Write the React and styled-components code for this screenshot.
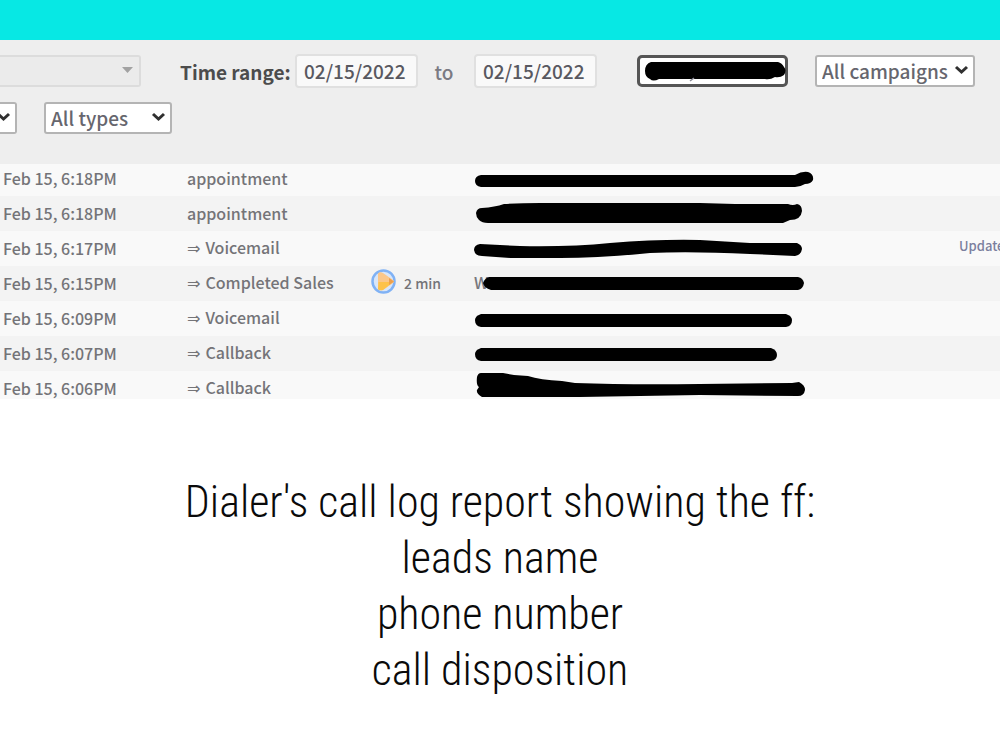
import React, { useState } from 'react';
import styled, { createGlobalStyle } from 'styled-components';

const GlobalStyle = createGlobalStyle`
    * {
        box-sizing: border-box;
    }

    body {
        margin: 0;
        background: #ffffff;
        overflow-x: hidden;
        font-family: 'Noto Sans CJK SC', 'Open Sans', sans-serif;
        font-weight: 500;
    }
`;

// Styled components
const TopBar = styled.header`
    height: 40px;
    background: #07e8e4;
`;

const Filters = styled.form`
    display: flex;
    flex-direction: column;
    gap: 13px;
    padding: 14px 0 26px;
    background: #eeeeee;
    color: #4c4c4c;
    font-size: 19px;
    overflow: hidden;
`;

const FilterRow = styled.div`
    display: flex;
    align-items: center;
    gap: 27px;
    height: 34px;
`;

const SelectBox = styled.div`
    position: relative;
    flex: none;
    width: ${(props) => props.$width}px;
`;

const Select = styled.select`
    display: block;
    width: 100%;
    height: 32px;
    padding: 0 5px 1px;
    appearance: none;
    border: 2px solid #b4b4b4;
    border-left-width: ${(props) => (props.$cut ? 0 : 2)}px;
    border-radius: ${(props) => (props.$cut ? '0 3px 3px 0' : '3px')};
    background: #ffffff;
    color: #66666e;
    font-family: inherit;
    font-size: 19px;
    font-weight: 500;
    outline: none;

    &:disabled {
        border-color: #dcdcdc;
        background: #ebebeb;
        opacity: 1;
    }
`;

const Arrow = styled.svg`
    position: absolute;
    top: 10px;
    right: 6px;
    pointer-events: none;
`;

const Range = styled.div`
    display: flex;
    align-items: center;
    flex: none;
    margin: 0 13px 0 12px;
`;

const RangeLabel = styled.label`
    width: 115px;
    font-weight: bold;
    white-space: nowrap;
`;

const ToLabel = styled.label`
    width: 56px;
    padding-right: 4px;
    text-align: center;
    color: #7a7a82;
`;

const DateInput = styled.input`
    width: 123px;
    height: 34px;
    padding: 0 7px 2px;
    border: 2px solid #e0e0e0;
    border-radius: 4px;
    background: #f9f9f9;
    color: #585860;
    font-family: inherit;
    font-size: 19px;
    font-weight: 500;
    outline: none;
`;

const AgentBox = styled.div`
    position: relative;
    flex: none;
    width: 151px;
`;

const AgentInput = styled.input`
    display: block;
    width: 100%;
    height: 32px;
    border: 3px solid #555555;
    border-radius: 5px;
    background: #ffffff;
    outline: none;
`;

const AgentMark = styled.svg`
    position: absolute;
    top: 0;
    left: 0;
    pointer-events: none;
`;

const LogPane = styled.section`
    overflow: hidden;
    border-top: 3px solid #eeeeee;
`;

const LogTable = styled.table`
    width: 100%;
    margin: -3px 0 -7px;
    table-layout: fixed;
    border-spacing: 0;
    color: #747478;
    font-size: 16px;
    line-height: 24px;
`;

const LogRow = styled.tr`
    height: 35px;
    background: #f9f9f9;

    &:nth-child(even) {
        background: #f3f3f3;
    }
`;

const Cell = styled.td`
    padding: 0 0 2px 3px;
    white-space: nowrap;
`;

const Transfer = styled.span`
    margin-right: 5px;
    font-family: 'DejaVu Sans', sans-serif;
`;

const LeadCell = styled.td`
    padding: 0;
`;

const Recording = styled.div`
    display: flex;
    align-items: center;
    gap: 8px;
    font-size: 14px;
`;

const PlayButton = styled.button`
    display: block;
    padding: 0;
    border: none;
    background: none;
    cursor: pointer;
`;

const Scribble = styled.svg`
    display: block;
`;

const UpdateLink = styled.a`
    display: block;
    padding-bottom: 4px;
    color: #7b7f9e;
    font-size: 13px;
    text-decoration: none;
`;

const Caption = styled.p`
    margin: 0;
    padding: 75px 20px 0;
    color: #0a0a0a;
    font-family: 'Roboto Condensed', 'Liberation Sans Narrow', sans-serif;
    font-size: 44px;
    font-weight: 350;
    line-height: 56px;
    text-align: center;
`;

const calls = [
    { time: 'Feb 15, 6:18PM', result: 'appointment', mark: 'M11 14H325Q332 10 338 11Q344 13 343 19Q341 23 335 23Q330 26 325 26H11Q5 25 5 20Q5 15 11 14Z' },
    { time: 'Feb 15, 6:18PM', result: 'appointment', mark: 'M12 12Q25 11 34 8Q50 7 70 7H230L265 8H318Q323 10 327 8Q332 9 332 15Q331 24 320 24L313 27H18Q12 27 9 24Q6 21 6 17Q7 12 12 12Z' },
    { time: 'Feb 15, 6:17PM', result: 'Voicemail', transfer: true, mark: 'M10 13L50 15Q100 16 140 12Q190 8 230 9L280 12L327 12Q332 14 332 18Q331 24 325 25L280 23Q220 20 180 22Q130 27 90 27H40L12 25Q5 25 4 19Q4 14 10 13Z', update: true },
    { time: 'Feb 15, 6:15PM', result: 'Completed Sales', transfer: true, length: '2 min', initial: 'W', mark: 'M19 11H328Q333 12 334 17Q333 23 328 24H21Q14 22 13 17Q15 12 19 11Z' },
    { time: 'Feb 15, 6:09PM', result: 'Voicemail', transfer: true, mark: 'M11 13H316Q322 15 322 19Q322 25 316 26H11Q5 25 5 19Q5 15 11 13Z' },
    { time: 'Feb 15, 6:07PM', result: 'Callback', transfer: true, mark: 'M11 12H301Q307 14 307 19Q307 24 301 25H11Q5 24 5 18Q5 14 11 12Z' },
    { time: 'Feb 15, 6:06PM', result: 'Callback', transfer: true, mark: 'M11 2H33L44 4L58 5Q70 9 92 10L105 12Q160 14 230 13L322 12L329 11Q335 14 335 19Q334 25 328 25L230 24L110 26H12Q6 23 7 19L9 16Q6 14 7 6Q8 2 11 2Z' },
];

const lines = ["Dialer's call log report showing the ff:", 'leads name', 'phone number', 'call disposition'];

const Chevron = () => (
    <Arrow width="15" height="10" viewBox="0 0 15 10" aria-hidden="true">
        <path d="M2 2L7.5 7L13 2" fill="none" stroke="#303030" strokeWidth="3" />
    </Arrow>
);

const PlayIcon = () => (
    <svg width="25" height="25" viewBox="0 0 25 25" aria-hidden="true">
        <circle cx="12.5" cy="12.5" r="11" fill="#d9e6f8" stroke="#80b2f5" strokeWidth="2.5" />
        <path d="M7 4.5Q9 2.5 12 4L22 11Q24 12.5 22 14L12 21Q8 22 7 20Z" fill="#fbc78a" />
        <path d="M7.5 13L22 13L12 21Q8 22 7 20Z" fill="#fdc24a" />
        <path d="M18 9L23 12.5L18 16Z" fill="#eda04e" />
    </svg>
);

const CallRow = ({ call }) => (
    <LogRow>
        <Cell>{call.time}</Cell>
        <Cell>
            {call.transfer && <Transfer>⇒</Transfer>}
            {call.result}
        </Cell>
        <Cell>
            {call.length && (
                <Recording>
                    <PlayButton type="button" aria-label="Play recording">
                        <PlayIcon />
                    </PlayButton>
                    {call.length}
                </Recording>
            )}
        </Cell>
        <LeadCell>
            <Scribble width="350" height="35" viewBox="0 0 350 35" aria-label="Redacted lead">
                {call.initial && (
                    <text x="4" y="23" fill="#77777c" fontSize="16">
                        {call.initial}
                    </text>
                )}
                <path d={call.mark} fill="#000000" />
            </Scribble>
        </LeadCell>
        <Cell>{call.update && <UpdateLink href="#update">Update</UpdateLink>}</Cell>
    </LogRow>
);

const App = () => {
    const [from, setFrom] = useState('02/15/2022');
    const [to, setTo] = useState('02/15/2022');

    return (
        <>
            <GlobalStyle />
            <TopBar />
            <main>
                <Filters>
                    <FilterRow>
                        <SelectBox $width={141}>
                            <Select $cut disabled aria-label="List" />
                            <Arrow width="15" height="10" viewBox="0 0 15 10" aria-hidden="true">
                                <path d="M2 2H13L7.5 8Z" fill="#a2a2a2" />
                            </Arrow>
                        </SelectBox>
                        <Range>
                            <RangeLabel htmlFor="from">Time range:</RangeLabel>
                            <DateInput id="from" type="text" value={from} onChange={(e) => setFrom(e.target.value)} />
                            <ToLabel htmlFor="to">to</ToLabel>
                            <DateInput id="to" type="text" value={to} onChange={(e) => setTo(e.target.value)} />
                        </Range>
                        <AgentBox>
                            <AgentInput type="text" aria-label="Agent" />
                            <AgentMark width="151" height="32" viewBox="0 0 151 32" aria-hidden="true">
                                <path d="M14 7H141Q145 8 147 12Q150 15 147 20Q143 23 138 22Q133 25 128 24H22Q16 27 13 24Q8 22 8 16Q8 9 14 7Z" fill="#000000" />
                                <path d="M53 26L57 23" stroke="#8a8a96" strokeWidth="1.5" />
                            </AgentMark>
                        </AgentBox>
                        <SelectBox $width={160}>
                            <Select aria-label="Campaign">
                                <option>All campaigns</option>
                            </Select>
                            <Chevron />
                        </SelectBox>
                    </FilterRow>
                    <FilterRow>
                        <SelectBox $width={17}>
                            <Select $cut aria-label="Status" />
                            <Chevron />
                        </SelectBox>
                        <SelectBox $width={128}>
                            <Select aria-label="Type">
                                <option>All types</option>
                            </Select>
                            <Chevron />
                        </SelectBox>
                    </FilterRow>
                </Filters>
                <LogPane>
                    <LogTable>
                        <colgroup>
                            <col style={{ width: '18.4%' }} />
                            <col style={{ width: '18.4%' }} />
                            <col style={{ width: '10.2%' }} />
                            <col />
                            <col style={{ width: '4.4%' }} />
                        </colgroup>
                        <tbody>
                            {calls.map((call) => (
                                <CallRow key={call.mark} call={call} />
                            ))}
                        </tbody>
                    </LogTable>
                </LogPane>
                <Caption>
                    {lines.map((line) => (
                        <React.Fragment key={line}>
                            {line}
                            <br />
                        </React.Fragment>
                    ))}
                </Caption>
            </main>
        </>
    );
};

export default App;
